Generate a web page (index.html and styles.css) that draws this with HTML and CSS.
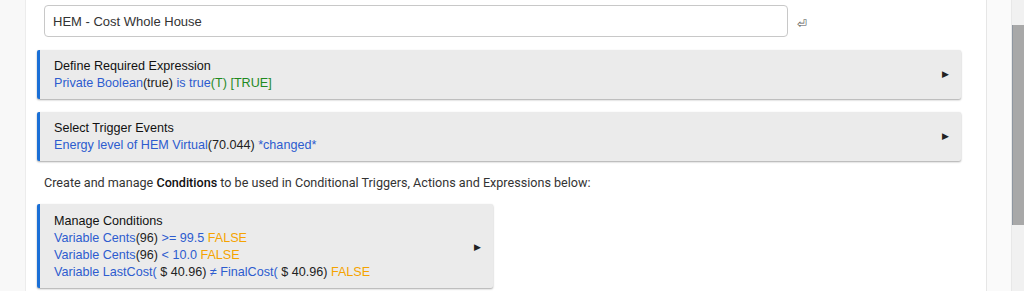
FILE: index.html
```html
<!DOCTYPE html>
<html>
  <head>
    <title>HEM - Cost Whole House</title>
    <link rel="stylesheet" href="styles.css">
  </head>
  <body>
    <div class="window">
      <div class="gutter-left"></div>
      <div class="main">
        <div class="name-row">
          <input type="text" class="name-input" value="HEM - Cost Whole House" />
          <span class="enter">&#x23CE;</span>
        </div>

        <div class="card">
          <div class="card-body">
            <div class="title">Define Required Expression</div>
            <div><span class="blue">Private Boolean</span>(true) <span class="blue">is true</span><span class="green">(T) [TRUE]</span></div>
          </div>
          <span class="arrow">&#9654;</span>
        </div>

        <div class="card">
          <div class="card-body">
            <div class="title">Select Trigger Events</div>
            <div><span class="blue">Energy level of HEM Virtual</span>(70.044) <span class="blue">*changed*</span></div>
          </div>
          <span class="arrow">&#9654;</span>
        </div>

        <p class="note">Create and manage <b>Conditions</b> to be used in Conditional Triggers, Actions and Expressions below:</p>

        <div class="card half">
          <div class="card-body">
            <div class="title">Manage Conditions</div>
            <div><span class="blue">Variable Cents</span>(96) <span class="blue">&gt;= 99.5</span> <span class="orange">FALSE</span></div>
            <div><span class="blue">Variable Cents</span>(96) <span class="blue">&lt; 10.0</span> <span class="orange">FALSE</span></div>
            <div><span class="blue">Variable LastCost(</span> $ 40.96) <span class="blue">&ne; FinalCost(</span> $ 40.96) <span class="orange">FALSE</span></div>
          </div>
          <span class="arrow">&#9654;</span>
        </div>
      </div>
      <div class="gutter-right"></div>
      <div class="scrollbar">
        <div class="thumb"></div>
      </div>
    </div>
  </body>
</html>
```

FILE: styles.css
```css
html, body {
  margin: 0;
  height: 291px;
  overflow: hidden;
}
body {
  font-family: "Liberation Sans", Arial, sans-serif;
  font-size: 13px;
  color: #222;
}
.window {
  display: flex;
  height: 291px;
}
.gutter-left {
  width: 25px;
  background: #f8f8f8;
  border-right: 1px solid #ececec;
}
.main {
  flex: 1;
  background: #fff;
  padding: 5px 25px 0 11px;
}
.gutter-right {
  width: 24px;
  background: #fafafa;
  border-left: 1px solid #e6e6e6;
}
.scrollbar {
  width: 12px;
  background: #f1f1f1;
  border-left: 1px solid #e8e8e8;
}
.thumb {
  margin-top: 25px;
  height: 200px;
  background: #a8a8a8;
  border-left: 1px solid #8e96a0;
}
.name-row {
  display: flex;
  align-items: center;
  margin: 0 0 13px 7px;
}
.name-input {
  width: 744px;
  height: 32px;
  box-sizing: border-box;
  border: 1px solid #c8c8c8;
  border-radius: 4px;
  padding: 0 8px;
  font-family: inherit;
  font-size: 13px;
  color: #333;
}
.enter {
  margin: 6px 0 0 9px;
  font-size: 12px;
  color: #555;
}
.card {
  display: flex;
  align-items: center;
  background: #ebebeb;
  border-left: 3px solid #1a6fd6;
  border-radius: 2px;
  box-shadow: 0 1px 2px rgba(0, 0, 0, 0.35);
  margin-bottom: 13px;
  padding: 8px 12px 8px 14px;
  font-size: 12.6px;
  line-height: 16.5px;
}
.card.half {
  width: 456px;
  box-sizing: border-box;
  padding: 9px 12px 7px 14px;
  line-height: 17px;
}
.card-body {
  flex: 1;
}
.title {
  color: #111;
}
.arrow {
  font-size: 9px;
  color: #222;
}
.blue {
  color: #2d5ccf;
}
.green {
  color: #1f8a1f;
}
.orange {
  color: #f5a300;
}
.note {
  margin: 13px 0 13px 7px;
  font-family: Roboto, "Liberation Sans", sans-serif;
  font-size: 12.6px;
  line-height: 17px;
  color: #333;
}
.note b {
  font-weight: 500;
  color: #111;
}
```
